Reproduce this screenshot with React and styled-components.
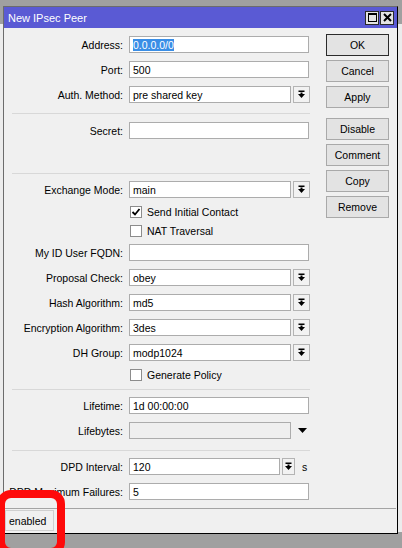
import styled, { createGlobalStyle } from "styled-components";

const GlobalStyle = createGlobalStyle`
  html, body {
    margin: 0;
    padding: 0;
  }
  body {
    height: 548px;
    overflow: hidden;
    background: linear-gradient(#a0a0a0 0 24px, #ececec 24px 532px, #a0a0a0 532px);
    font-family: "Liberation Sans", Arial, sans-serif;
    font-size: 10.5px;
    color: #000;
  }
`;

const Page = styled.div`
  position: relative;
  width: 402px;
  height: 548px;
  padding: 6px 0 0 3px;
  box-sizing: border-box;
`;

const Window = styled.div`
  width: 395px;
  height: 528px;
  box-sizing: border-box;
  border: 1px solid;
  border-color: #6c6c6c #000 #000 #6c6c6c;
  background: #f0f0f0;
  display: flex;
  flex-direction: column;
`;

const TitleBar = styled.div`
  height: 21px;
  flex-shrink: 0;
  display: flex;
  align-items: center;
  padding: 0 3px 0 4px;
  background: #5a5ad4;
  color: #fff;
  font-size: 11px;
`;

const TitleButtons = styled.div`
  margin-left: auto;
  display: flex;
  gap: 1px;
`;

const TitleButton = styled.div`
  width: 14px;
  height: 14px;
  box-sizing: border-box;
  border: 1px solid #2a2a2a;
  background: #e4e4e4;
  display: flex;
  align-items: center;
  justify-content: center;
`;

const Main = styled.div`
  flex: 1;
  display: flex;
`;

const Form = styled.div`
  width: 310px;
  padding-top: 4px;
  display: flex;
  flex-direction: column;
`;

const Row = styled.div`
  height: 25px;
  display: flex;
  align-items: center;
`;

const Label = styled.div`
  width: 125px;
  box-sizing: border-box;
  padding-right: 6px;
  text-align: right;
  white-space: nowrap;
`;

const Input = styled.div`
  width: ${(p) => p.width || 180}px;
  height: 17px;
  box-sizing: border-box;
  border: 1px solid #acacac;
  background: ${(p) => (p.disabled ? "#efefef" : "#fff")};
  padding: 0 3px;
  display: flex;
  align-items: center;
  white-space: nowrap;
`;

const Selected = styled.span`
  background: #3a8ee6;
  color: #fff;
`;

const DropButton = styled.div`
  width: ${(p) => p.width || 17}px;
  height: 17px;
  margin-left: 2px;
  box-sizing: border-box;
  border: 1px solid #b4b4b4;
  background: #f2f2f2;
  display: flex;
  align-items: center;
  justify-content: center;
`;

const Unit = styled.span`
  margin-left: 7px;
`;

const BareArrow = styled.div`
  margin-left: 7px;
  display: flex;
  align-items: center;
`;

const Separator = styled.div`
  margin: ${(p) => p.top}px 0 ${(p) => p.bottom}px 8px;
  width: 298px;
  height: 1px;
  background: #d8d8d8;
`;

const CheckRow = styled.div`
  height: 19px;
  display: flex;
  align-items: center;
  padding-left: 126px;
`;

const Box = styled.div`
  width: 12px;
  height: 12px;
  box-sizing: border-box;
  border: 1px solid #8c8c8c;
  background: #fff;
  display: flex;
  align-items: center;
  justify-content: center;
`;

const CheckText = styled.span`
  margin-left: 5px;
`;

const Buttons = styled.div`
  margin-left: 12px;
  padding-top: 6px;
  display: flex;
  flex-direction: column;
  gap: 4px;
`;

const Button = styled.div`
  width: 63px;
  height: 22px;
  box-sizing: border-box;
  border: 1px solid ${(p) => (p.primary ? "#2b2b2b" : "#a9a9a9")};
  background: #e3e3e3;
  display: flex;
  align-items: center;
  justify-content: center;
  margin-top: ${(p) => (p.gapBefore ? 6 : 0)}px;
`;

const StatusBar = styled.div`
  height: 25px;
  box-sizing: border-box;
  margin: 0 1px;
  border-top: 1px solid #a4a4a4;
  padding-top: 1px;
`;

const StatusField = styled.div`
  width: 49px;
  height: 21px;
  box-sizing: border-box;
  border: 1px solid #cfcfcf;
  padding-left: 3px;
  display: flex;
  align-items: center;
`;

const Highlight = styled.div`
  position: absolute;
  left: -3px;
  top: 490px;
  width: 68px;
  height: 66px;
  box-sizing: border-box;
  border: 8px solid #fe0a0a;
  border-radius: 14px;
`;

function DropIcon() {
  return (
    <svg width="9" height="9" viewBox="0 0 9 9">
      <rect x="1.5" y="0.5" width="6" height="1.5" fill="#000" />
      <rect x="3.5" y="2.5" width="2" height="2" fill="#000" />
      <polygon points="1,4 8,4 4.5,8" fill="#000" />
    </svg>
  );
}

function Select({ value, width }) {
  return (
    <>
      <Input width={width || 162}>{value}</Input>
      <DropButton>
        <DropIcon />
      </DropButton>
    </>
  );
}

function Check({ checked, children }) {
  return (
    <CheckRow>
      <Box>
        {checked && (
          <svg width="10" height="10" viewBox="0 0 10 10">
            <polyline
              points="1.5,5 4,7.5 8.5,2"
              fill="none"
              stroke="#000"
              strokeWidth="1.8"
            />
          </svg>
        )}
      </Box>
      <CheckText>{children}</CheckText>
    </CheckRow>
  );
}

export default function App() {
  return (
    <Page>
      <GlobalStyle />
      <Window>
        <TitleBar>
          New IPsec Peer
          <TitleButtons>
            <TitleButton>
              <svg width="9" height="9" viewBox="0 0 9 9">
                <rect x="0.5" y="0.5" width="8" height="8" fill="none" stroke="#000" />
                <rect x="0" y="0" width="9" height="2" fill="#000" />
              </svg>
            </TitleButton>
            <TitleButton>
              <svg width="9" height="9" viewBox="0 0 9 9">
                <path d="M1 1L8 8M8 1L1 8" stroke="#000" strokeWidth="2" />
              </svg>
            </TitleButton>
          </TitleButtons>
        </TitleBar>

        <Main>
          <Form>
            <Row>
              <Label>Address:</Label>
              <Input>
                <Selected>0.0.0.0/0</Selected>
              </Input>
            </Row>
            <Row>
              <Label>Port:</Label>
              <Input>500</Input>
            </Row>
            <Row>
              <Label>Auth. Method:</Label>
              <Select value="pre shared key" />
            </Row>
            <Separator top={6} bottom={4} />
            <Row>
              <Label>Secret:</Label>
              <Input />
            </Row>
            <Separator top={30} bottom={3} />
            <Row>
              <Label>Exchange Mode:</Label>
              <Select value="main" />
            </Row>
            <Check checked>Send Initial Contact</Check>
            <Check>NAT Traversal</Check>
            <Row>
              <Label>My ID User FQDN:</Label>
              <Input />
            </Row>
            <Row>
              <Label>Proposal Check:</Label>
              <Select value="obey" />
            </Row>
            <Row>
              <Label>Hash Algorithm:</Label>
              <Select value="md5" />
            </Row>
            <Row>
              <Label>Encryption Algorithm:</Label>
              <Select value="3des" />
            </Row>
            <Row>
              <Label>DH Group:</Label>
              <Select value="modp1024" />
            </Row>
            <Check>Generate Policy</Check>
            <Separator top={5} bottom={3} />
            <Row>
              <Label>Lifetime:</Label>
              <Input>1d 00:00:00</Input>
            </Row>
            <Row>
              <Label>Lifebytes:</Label>
              <Input width={162} disabled />
              <BareArrow>
                <svg width="9" height="5" viewBox="0 0 9 5">
                  <polygon points="0,0 9,0 4.5,5" fill="#000" />
                </svg>
              </BareArrow>
            </Row>
            <Separator top={7} bottom={3} />
            <Row>
              <Label>DPD Interval:</Label>
              <Input width={151}>120</Input>
              <DropButton width={13}>
                <DropIcon />
              </DropButton>
              <Unit>s</Unit>
            </Row>
            <Row>
              <Label>DPD Maximum Failures:</Label>
              <Input>5</Input>
            </Row>
          </Form>

          <Buttons>
            <Button primary>OK</Button>
            <Button>Cancel</Button>
            <Button>Apply</Button>
            <Button gapBefore>Disable</Button>
            <Button>Comment</Button>
            <Button>Copy</Button>
            <Button>Remove</Button>
          </Buttons>
        </Main>

        <StatusBar>
          <StatusField>enabled</StatusField>
        </StatusBar>
      </Window>
      <Highlight />
    </Page>
  );
}
